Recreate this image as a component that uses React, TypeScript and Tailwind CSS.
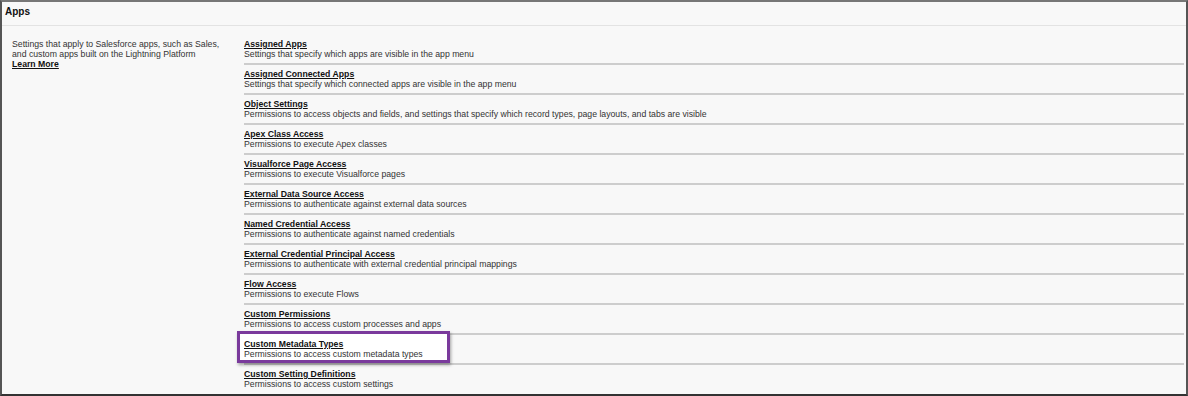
const items = [
  { title: "Assigned Apps", desc: "Settings that specify which apps are visible in the app menu" },
  { title: "Assigned Connected Apps", desc: "Settings that specify which connected apps are visible in the app menu" },
  {
    title: "Object Settings",
    desc: "Permissions to access objects and fields, and settings that specify which record types, page layouts, and tabs are visible",
  },
  { title: "Apex Class Access", desc: "Permissions to execute Apex classes" },
  { title: "Visualforce Page Access", desc: "Permissions to execute Visualforce pages" },
  { title: "External Data Source Access", desc: "Permissions to authenticate against external data sources" },
  { title: "Named Credential Access", desc: "Permissions to authenticate against named credentials" },
  {
    title: "External Credential Principal Access",
    desc: "Permissions to authenticate with external credential principal mappings",
  },
  { title: "Flow Access", desc: "Permissions to execute Flows" },
  { title: "Custom Permissions", desc: "Permissions to access custom processes and apps" },
  { title: "Custom Metadata Types", desc: "Permissions to access custom metadata types", highlight: true },
  { title: "Custom Setting Definitions", desc: "Permissions to access custom settings" },
];

export default function App() {
  return (
    <div className="h-[396px] w-[1188px] bg-white font-['Liberation_Sans',Arial,sans-serif] text-[8.7px] leading-[10px] text-[#222]">
      <div className="flex h-full flex-col border-x-2 border-t-2 border-b-2 border-x-[#555] border-t-[#777] border-b-[#333] bg-[#f8f8f8]">
        <div className="h-[24px] shrink-0 border-b border-[#e3e3e3] pl-[3px] pt-[4.5px]">
          <h2 className="text-[10px] font-bold leading-[10px] text-[#111]">Apps</h2>
        </div>
        <div className="flex pt-[9px]">
          <div className="w-[242px] shrink-0 pl-[10px] pt-[4px] text-[#333]">
            <p>
              Settings that apply to Salesforce apps, such as Sales,
              <br />
              and custom apps built on the Lightning Platform
            </p>
            <a className="font-bold text-[#111] underline">Learn More</a>
          </div>
          <ul className="mr-[2px] flex-1">
            {items.map((it, i) => (
              <li
                key={it.title}
                className={
                  "relative pt-[4px] " +
                  (i < items.length - 1 ? "h-[30px] border-b-2 border-[#cdcdcd]" : "")
                }
              >
                {it.highlight && (
                  <div className="absolute -left-[7px] -top-[4px] h-[32px] w-[213px] border-[3px] border-[#7a3a9c] bg-white shadow-[1px_2px_3px_rgba(0,0,0,0.35)]" />
                )}
                <div className="relative">
                  <a className="font-bold text-[#111] underline">{it.title}</a>
                  <p className="text-[#333]">{it.desc}</p>
                </div>
              </li>
            ))}
          </ul>
        </div>
      </div>
    </div>
  );
}
